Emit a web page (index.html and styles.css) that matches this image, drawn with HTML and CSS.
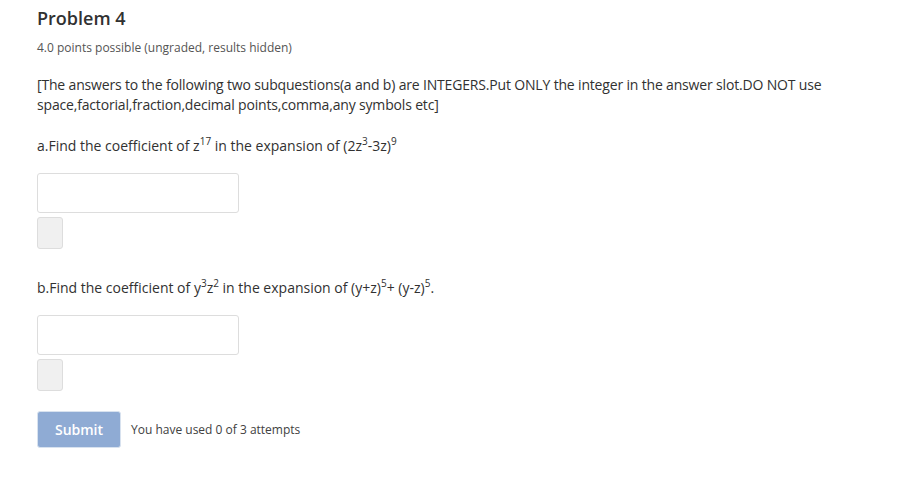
FILE: index.html
```html
<!DOCTYPE html>
<html lang="en">
<head>
    <meta charset="UTF-8">
    <title>Problem 4</title>
    <link rel="stylesheet" href="styles.css">
</head>
<body>

    <div class="problem">
        <h3 class="problem-title">Problem 4</h3>
        <div class="problem-progress">4.0 points possible (ungraded, results hidden)</div>

        <p class="intro">[The answers to the following two subquestions(a and b) are INTEGERS.Put ONLY the integer in the answer slot.DO NOT use space,factorial,fraction,decimal points,comma,any symbols etc]</p>

        <!-- Part a -->
        <div class="question">
            <p>a.Find the coefficient of z<sup>17</sup> in the expansion of (2z<sup>3</sup>-3z)<sup>9</sup></p>
            <input type="text" class="answer-input" aria-label="Answer a">
            <span class="status-box"></span>
        </div>

        <!-- Part b -->
        <div class="question">
            <p>b.Find the coefficient of y<sup>3</sup>z<sup>2</sup> in the expansion of (y+z)<sup>5</sup>+ (y-z)<sup>5</sup>.</p>
            <input type="text" class="answer-input" aria-label="Answer b">
            <span class="status-box"></span>
        </div>

        <div class="action">
            <button class="submit-btn">Submit</button>
            <span class="attempts">You have used 0 of 3 attempts</span>
        </div>
    </div>

</body>
</html>
```

FILE: styles.css
```css
body {
    margin: 0;
    font-family: "Open Sans", "Noto Sans", sans-serif;
    color: #313131;
    background: #fff;
}

.problem {
    padding: 6px 37px;
}

.problem-title {
    margin: 0;
    font-size: 18px;
    font-weight: 600;
    line-height: 24px;
    color: #313131;
}

.problem-progress {
    margin-top: 10px;
    font-size: 12px;
    line-height: 16px;
    color: #545454;
}

.intro {
    margin: 19px 0 0;
    font-size: 14px;
    line-height: 20px;
    letter-spacing: -0.17px;
}

.question {
    margin-top: 21px;
}

.question + .question {
    margin-top: 29px;
}

.question p {
    margin: 0;
    font-size: 14px;
    line-height: 20px;
}

sup {
    font-size: 10px;
    line-height: 0;
}

.answer-input {
    display: block;
    box-sizing: border-box;
    width: 202px;
    height: 40px;
    margin-top: 17px;
    border: 1px solid #ddd;
    border-radius: 3px;
    background: #fff;
}

.status-box {
    display: block;
    box-sizing: border-box;
    width: 26px;
    height: 32px;
    margin-top: 4px;
    border: 1px solid #ddd;
    border-radius: 3px;
    background: #f0f0f0;
}

.action {
    display: flex;
    align-items: center;
    gap: 10px;
    margin-top: 20px;
}

.submit-btn {
    width: 84px;
    height: 37px;
    padding: 0;
    border: 1px solid #d8e2ef;
    border-radius: 3px;
    background: #8fabd4;
    color: #fff;
    font-family: inherit;
    font-size: 14px;
    font-weight: 600;
}

.attempts {
    font-size: 12px;
    color: #414141;
}
```
